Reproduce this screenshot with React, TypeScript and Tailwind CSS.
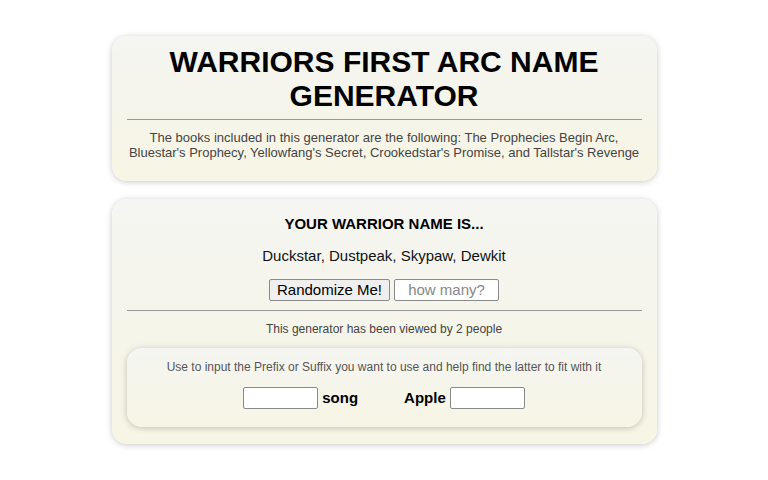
export default function App() {
  const font = { fontFamily: '"Liberation Sans", Arial, sans-serif' };
  const card =
    "rounded-[15px] bg-gradient-to-b from-[#f5f5f2] to-[#f7f5e4] shadow-[0_1px_6px_rgba(0,0,0,0.22)]";
  return (
    <div className="min-h-[480px] w-full bg-white pt-[36px]" style={font}>
      <div className="mx-auto flex w-[545px] flex-col gap-[18px]">
        <div className={`${card} px-[15px] pt-[9px] pb-[21px] text-center`}>
          <h1 className="text-[30px] font-bold leading-[34px] text-black">
            WARRIORS FIRST ARC NAME GENERATOR
          </h1>
          <div className="mt-[6px] h-px bg-[#999]" />
          <p className="mt-[10px] text-[13px] leading-[15px] text-[#444]">
            The books included in this generator are the following: The Prophecies Begin Arc,
            Bluestar's Prophecy, Yellowfang's Secret, Crookedstar's Promise, and Tallstar's Revenge
          </p>
        </div>
        <div className={`${card} px-[15px] pt-[16px] pb-[17px] text-center`}>
          <div className="text-[15px] font-bold leading-[18px] text-black">YOUR WARRIOR NAME IS...</div>
          <div className="mt-[14px] text-[15px] leading-[18px] text-[#111]">
            Duckstar, Dustpeak, Skypaw, Dewkit
          </div>
          <div className="mt-[14px] flex items-center justify-center gap-[4px]">
            <button className="h-[22px] rounded-[2px] border border-[#8a8a8a] bg-[#efefef] px-[7px] text-[15px] leading-[18px] text-black">
              Randomize Me!
            </button>
            <input
              placeholder="how many?"
              className="h-[22px] w-[105px] rounded-[2px] border border-[#8a8a8a] bg-white px-[2px] text-center text-[15px] text-black placeholder:text-[#888] outline-none"
            />
          </div>
          <div className="mt-[9px] h-px bg-[#999]" />
          <div className="mt-[11px] text-[12px] leading-[14px] text-[#444]">
            This generator has been viewed by 2 people
          </div>
          <div className={`${card} mt-[12px] px-[10px] pt-[12px] pb-[17px]`}>
            <div className="text-[12px] leading-[14px] text-[#555]">
              Use to input the Prefix or Suffix you want to use and help find the latter to fit with it
            </div>
            <div className="mt-[13px] flex items-center justify-center">
              <input className="h-[22px] w-[75px] rounded-[2px] border border-[#8a8a8a] bg-white" />
              <span className="ml-[4px] text-[15px] font-bold text-black">song</span>
              <span className="ml-[46px] text-[15px] font-bold text-black">Apple</span>
              <input className="ml-[4px] h-[22px] w-[75px] rounded-[2px] border border-[#8a8a8a] bg-white" />
            </div>
          </div>
        </div>
      </div>
    </div>
  );
}
